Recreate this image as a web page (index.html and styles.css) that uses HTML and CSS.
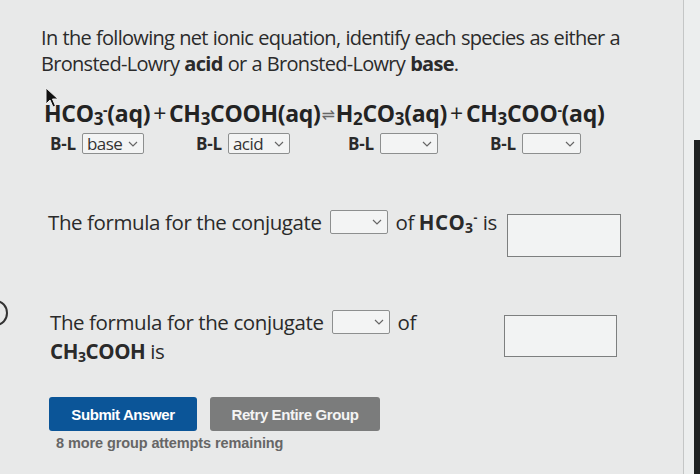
FILE: index.html
```html
<!DOCTYPE html>
<html>
<head>
<meta charset="utf-8">
<link rel="stylesheet" href="styles.css">
</head>
<body>
<div class="screen">
  <div class="page">
    <span class="radio-edge"></span>
    <p class="intro">In the following net ionic equation, identify each species as either a<br>Bronsted-Lowry <b>acid</b> or a Bronsted-Lowry <b>base</b>.</p>

    <div class="equation">
      <svg class="cursor" width="14" height="22" viewBox="0 0 14 22"><path d="M1 1 L1 17 L5 13 L8 20 L10.5 19 L7.5 12 L13 12 Z" fill="#111" stroke="#eee" stroke-width="1"/></svg>
      <span class="species">HCO<sub>3</sub><sup>-</sup>(aq)</span><span class="op">+</span><span class="species">CH<sub>3</sub>COOH(aq)</span><span class="arrow">⇌</span><span class="species">H<sub>2</sub>CO<sub>3</sub>(aq)</span><span class="op">+</span><span class="species">CH<sub>3</sub>COO<sup>-</sup>(aq)</span>
    </div>

    <div class="bl-row">
      <div class="bl"><span class="bl-label">B-L</span><span class="select sel-a">base<svg class="chev" width="10" height="6" viewBox="0 0 10 6"><path d="M1 1 L5 5 L9 1" fill="none" stroke="#666" stroke-width="1.2"/></svg></span></div>
      <div class="bl"><span class="bl-label">B-L</span><span class="select sel-b">acid<svg class="chev" width="10" height="6" viewBox="0 0 10 6"><path d="M1 1 L5 5 L9 1" fill="none" stroke="#666" stroke-width="1.2"/></svg></span></div>
      <div class="bl"><span class="bl-label">B-L</span><span class="select sel-c"><svg class="chev" width="10" height="6" viewBox="0 0 10 6"><path d="M1 1 L5 5 L9 1" fill="none" stroke="#666" stroke-width="1.2"/></svg></span></div>
      <div class="bl"><span class="bl-label">B-L</span><span class="select sel-d"><svg class="chev" width="10" height="6" viewBox="0 0 10 6"><path d="M1 1 L5 5 L9 1" fill="none" stroke="#666" stroke-width="1.2"/></svg></span></div>
    </div>

    <div class="conj conj-one">
      <div class="conj-text">The formula for the conjugate <span class="select sel-conj"><svg class="chev" width="10" height="6" viewBox="0 0 10 6"><path d="M1 1 L5 5 L9 1" fill="none" stroke="#666" stroke-width="1.2"/></svg></span> of <b>HCO<sub>3</sub><sup>-</sup></b> is</div>
      <span class="answer"></span>
    </div>

    <div class="conj conj-two">
      <div class="conj-text">The formula for the conjugate <span class="select sel-conj"><svg class="chev" width="10" height="6" viewBox="0 0 10 6"><path d="M1 1 L5 5 L9 1" fill="none" stroke="#666" stroke-width="1.2"/></svg></span> of<br><b>CH<sub>3</sub>COOH</b> is</div>
      <span class="answer"></span>
    </div>

    <div class="actions">
      <button class="btn btn-primary">Submit Answer</button>
      <button class="btn btn-secondary">Retry Entire Group</button>
    </div>
    <p class="attempts">8 more group attempts remaining</p>
  </div>
  <div class="edge"></div>
</div>
</body>
</html>
```

FILE: styles.css
```css
html, body {
  margin: 0;
  padding: 0;
}
body {
  background: #e9eaea;
  width: 700px;
  height: 474px;
  overflow: hidden;
  font-family: "Open Sans", "DejaVu Sans", sans-serif;
  color: #262626;
}
.screen {
  display: flex;
  height: 474px;
}
.page {
  position: relative;
  width: 684px;
  box-sizing: border-box;
  padding: 25px 0 0 41px;
  border-right: 1px solid #c4c6c6;
  background: #e8e9e9;
}
.edge {
  flex: 1;
  background:
    linear-gradient(to bottom, #eceeee 140px, rgba(236,238,238,0) 140px),
    linear-gradient(to right, #eceeee 0 10px, #202323 10px);
}
.radio-edge {
  position: absolute;
  left: -16px;
  top: 300px;
  width: 20px;
  height: 22px;
  border: 2px solid #333;
  border-radius: 50%;
}
.intro {
  margin: 0;
  font-size: 20px;
  line-height: 26px;
  letter-spacing: -0.7px;
  word-spacing: 0.5px;
  color: #2b2b2b;
}
.intro b {
  font-weight: 700;
}
.equation {
  position: relative;
  margin-top: 22px;
  margin-left: 3px;
  font-size: 23px;
  font-weight: 700;
  line-height: 28px;
  letter-spacing: -0.3px;
  color: #232323;
  white-space: nowrap;
}
.equation sub {
  font-size: 17px;
  vertical-align: -3px;
  line-height: 0;
}
.equation sup {
  font-size: 14px;
  vertical-align: 7px;
  line-height: 0;
}
.op {
  margin: 0 3px;
  font-weight: 400;
}
.arrow {
  margin: 0 1px;
  font-size: 16px;
  font-weight: 400;
  color: #666;
  vertical-align: 2px;
}
.cursor {
  position: absolute;
  left: 1px;
  top: -12px;
}
.bl-row {
  display: grid;
  grid-template-columns: 146px 152px 142px auto;
  margin-top: 4px;
  margin-left: 9px;
}
.bl {
  display: flex;
  align-items: center;
  gap: 6px;
}
.bl-label {
  font-size: 17px;
  font-weight: 700;
  color: #2a2a2a;
  letter-spacing: -0.2px;
}
.select {
  display: inline-flex;
  align-items: center;
  justify-content: space-between;
  box-sizing: border-box;
  height: 21px;
  padding: 0 5px 0 4px;
  background: #f3f4f4;
  border: 1px solid #8d8f8f;
  border-radius: 2px;
  font-size: 17px;
  font-weight: 400;
  color: #333;
  letter-spacing: -0.5px;
  vertical-align: middle;
}
.chev {
  margin-left: auto;
  flex: none;
}
.sel-a { width: 62px; }
.sel-b { width: 62px; }
.sel-c { width: 58px; }
.sel-d { width: 59px; }
.sel-conj {
  width: 58px;
  height: 24px;
  margin: 0 3px;
  position: relative;
  top: -3px;
}
.conj {
  display: flex;
  align-items: flex-start;
  font-size: 20.5px;
  letter-spacing: -0.4px;
  color: #2a2a2a;
}
.conj-one {
  margin-top: 53px;
  margin-left: 7px;
}
.conj-one b {
  letter-spacing: 0.4px;
}
.conj-one .answer {
  margin-left: 10px;
  margin-top: 6px;
}
.conj-two {
  margin-top: 51px;
  margin-left: 9px;
}
.conj-two .conj-text {
  width: 454px;
}
.conj-text {
  line-height: 29px;
}
.conj b {
  font-weight: 700;
}
.conj sub {
  font-size: 14px;
  vertical-align: -3px;
  line-height: 0;
}
.conj sup {
  font-size: 12px;
  vertical-align: 8px;
  line-height: 0;
}
.answer {
  display: block;
  box-sizing: border-box;
  width: 114px;
  height: 43px;
  background: #f2f3f3;
  border: 1px solid #7d7f7f;
}
.conj-two .answer {
  width: 113px;
  height: 42px;
  margin-top: 7px;
}
.actions {
  display: flex;
  gap: 13px;
  margin-top: 31px;
  margin-left: 8px;
}
.btn {
  height: 34px;
  border: none;
  border-radius: 3px;
  font-family: "Liberation Sans", Arial, sans-serif;
  font-size: 15px;
  font-weight: 700;
  letter-spacing: -0.4px;
  color: #fff;
  padding: 0;
}
.btn-primary {
  width: 148px;
  background: #0b5598;
}
.btn-secondary {
  width: 170px;
  background: #7b7c7c;
  color: #f4f4f4;
}
.attempts {
  margin: 4px 0 0 15px;
  font-family: "Liberation Sans", Arial, sans-serif;
  font-size: 14.5px;
  font-weight: 700;
  color: #666;
  letter-spacing: -0.1px;
}
```
